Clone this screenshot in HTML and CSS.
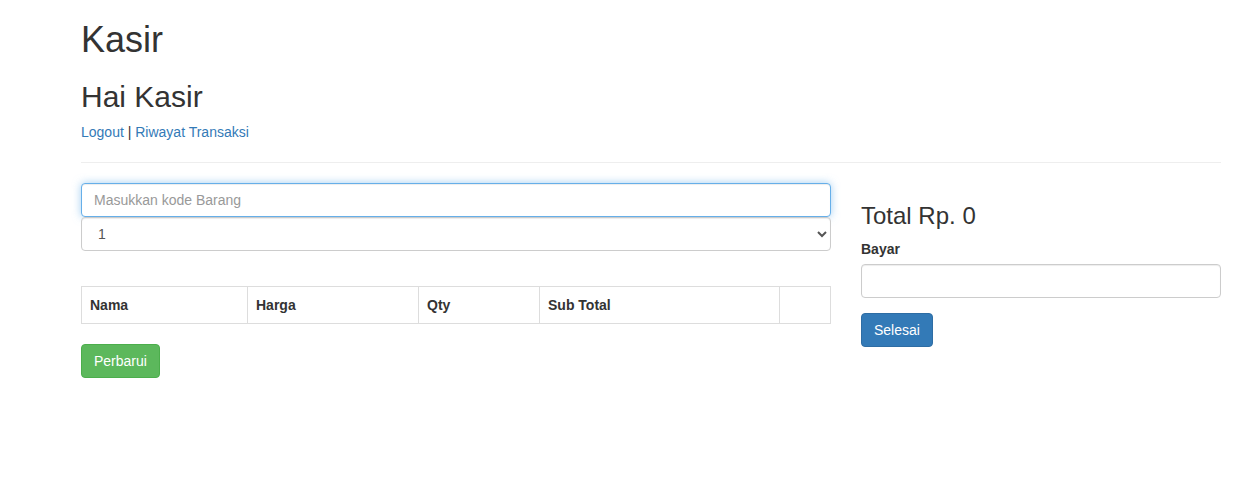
FILE: index.html
```html
<!DOCTYPE html>
<html lang="id">
<head>
    <meta charset="UTF-8">
    <meta name="viewport" content="width=device-width, initial-scale=1.0">
    <title>Kasir</title>
    <link rel="stylesheet" href="styles.css">
</head>
<body>
    <div class="container">
        <h1>Kasir</h1>
        <h2>Hai Kasir</h2>
        <p><a href="#">Logout</a> | <a href="#">Riwayat Transaksi</a></p>
        <hr>

        <div class="row">
            <div class="col-8">
                <form>
                    <input type="text" class="form-control is-focus" placeholder="Masukkan kode Barang">
                    <select class="form-control">
                        <option>1</option>
                        <option>2</option>
                        <option>3</option>
                    </select>
                </form>

                <table class="table">
                    <colgroup>
                        <col style="width: 166px">
                        <col style="width: 171px">
                        <col style="width: 121px">
                        <col style="width: 240px">
                        <col>
                    </colgroup>
                    <tr>
                        <th>Nama</th>
                        <th>Harga</th>
                        <th>Qty</th>
                        <th>Sub Total</th>
                        <th></th>
                    </tr>
                </table>

                <button class="btn btn-success">Perbarui</button>
            </div>

            <div class="col-4">
                <h3>Total Rp. 0</h3>
                <form>
                    <div class="form-group">
                        <label for="bayar">Bayar</label>
                        <input type="text" id="bayar" class="form-control">
                    </div>
                    <button type="button" class="btn btn-primary">Selesai</button>
                </form>
            </div>
        </div>
    </div>
</body>
</html>
```

FILE: styles.css
```css
* {
    box-sizing: border-box;
}

body {
    margin: 0;
    font-family: "Liberation Sans", Helvetica, Arial, sans-serif;
    font-size: 14px;
    line-height: 1.42857143;
    color: #333;
    background: #fff;
}

.container {
    width: 1170px;
    margin-left: 66px;
    padding: 0 15px;
}

h1, h2, h3 {
    font-weight: 500;
    line-height: 1.1;
    margin-top: 20px;
    margin-bottom: 10px;
}

h1 {
    font-size: 36px;
}

h2 {
    font-size: 30px;
    margin-bottom: 9px;
}

h3 {
    font-size: 24px;
}

p {
    margin: 0 0 10px;
}

a {
    color: #337ab7;
    text-decoration: none;
}

hr {
    margin: 20px 0;
    border: 0;
    border-top: 1px solid #eee;
}

.row {
    display: flex;
    margin: 0 -15px;
}

.col-8 {
    width: 780px;
    padding: 0 15px;
}

.col-4 {
    width: 390px;
    padding: 0 15px;
}

form {
    margin: 0;
}

.form-control {
    display: block;
    width: 100%;
    height: 34px;
    padding: 6px 12px;
    font-family: inherit;
    font-size: 14px;
    line-height: 1.42857143;
    color: #555;
    background: #fff;
    border: 1px solid #ccc;
    border-radius: 4px;
    box-shadow: inset 0 1px 1px rgba(0, 0, 0, .075);
}

.form-control::placeholder {
    color: #999;
}

.is-focus {
    border-color: #66afe9;
    outline: 0;
    box-shadow: inset 0 1px 1px rgba(0, 0, 0, .075), 0 0 8px rgba(102, 175, 233, .6);
}

.form-group {
    margin-bottom: 15px;
}

label {
    display: inline-block;
    margin-bottom: 5px;
    font-weight: bold;
}

.table {
    width: 100%;
    margin-top: 35px;
    margin-bottom: 20px;
    border-collapse: collapse;
    border-spacing: 0;
    table-layout: fixed;
    border: 1px solid #ddd;
}

.table th {
    padding: 8px;
    line-height: 1.42857143;
    text-align: left;
    vertical-align: bottom;
    border: 1px solid #ddd;
}

.btn {
    display: inline-block;
    padding: 6px 12px;
    font-family: inherit;
    font-size: 14px;
    line-height: 1.42857143;
    color: #fff;
    border: 1px solid transparent;
    border-radius: 4px;
    cursor: pointer;
}

.btn-success {
    background: #5cb85c;
    border-color: #4cae4c;
}

.btn-primary {
    background: #337ab7;
    border-color: #2e6da4;
}
```
